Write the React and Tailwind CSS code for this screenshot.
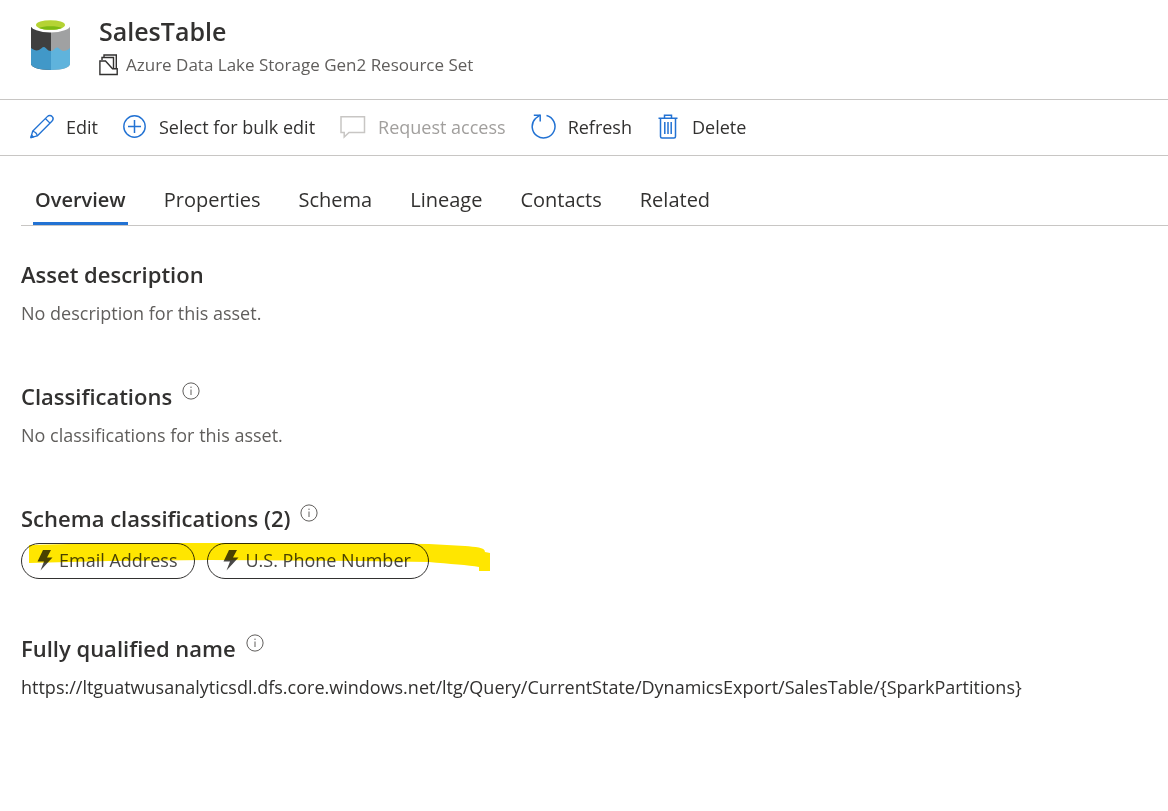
import React from "react";

function DataLakeIcon() {
  return (
    <svg width="40" height="50" viewBox="0 0 40 50" aria-hidden="true">
      <path d="M0 6V44C0 47 8 50 20 50V6Z" fill="#3f3f3f" />
      <path d="M20 6V50C32 50 39 47 39 44V6Z" fill="#a0a1a2" />
      <path d="M0 28C3 30 5 31 8 30C10 29 11 27 13 27C15 27 16 31 20 31V50C8 50 0 47 0 44Z" fill="#4198c8" />
      <path d="M20 31C23 31 24 27.500 26 27.500C28 27.500 29 30 32 31C35 31 37 30 39 28V44C39 47 32 50 20 50Z" fill="#5fb3dc" />
      <ellipse cx="19.5" cy="5" rx="20" ry="7.500" fill="#fff" />
      <ellipse cx="19.5" cy="5" rx="14.5" ry="4.8" fill="#b5d334" />
      <path d="M8 7.900C12 5.700 27 5.700 31 7.900C26 10.400 13 10.400 8 7.900Z" fill="#7dba12" />
    </svg>
  );
}

function ResourceSetIcon() {
  return (
    <svg width="20" height="22" viewBox="0 0 20 22" fill="none" stroke="#323130" strokeWidth="1.400" aria-hidden="true">
      <path d="M3 6V3.500H14.500V14" />
      <path d="M5 3.500V1H17.300V14.500" />
      <path d="M0.900 7H6.500L13.500 14.700H18.200V20.500H0.900Z" />
    </svg>
  );
}

function EditIcon() {
  return (
    <svg width="24" height="25" viewBox="0 0 25 25" fill="none" stroke="#2272d3" strokeWidth="1.400" strokeLinejoin="round" aria-hidden="true">
      <path d="M1 24L2.700 17.500L18 2.200C19.500 0.700 21.800 0.700 23 2C24.300 3.300 24.300 5.500 22.800 7L7.500 22.300Z" />
      <path d="M16 4.200L20.800 9M2.700 17.500C5 17.500 7.500 20 7.500 22.300" />
      <path d="M1 24L3.500 23.300L1.700 21.500Z" fill="#2272d3" />
    </svg>
  );
}

function AddIcon() {
  return (
    <svg width="24" height="24" viewBox="0 0 24 24" fill="none" stroke="#2272d3" strokeWidth="1.400" aria-hidden="true">
      <circle cx="11.500" cy="11.500" r="10.700" />
      <path d="M11.500 5V18M5 11.500H18" strokeWidth="1.500" />
    </svg>
  );
}

function CommentIcon() {
  return (
    <svg width="26" height="24" viewBox="0 0 26 24" fill="none" stroke="#c8c6c4" strokeWidth="1.500" aria-hidden="true">
      <path d="M1 1.800H24.500V17.500H9L4.200 22V17.500H1Z" />
    </svg>
  );
}

function RefreshIcon() {
  return (
    <svg width="25" height="25" viewBox="0 0 25 25" fill="none" stroke="#2272d3" strokeWidth="1.500" aria-hidden="true">
      <path d="M15.500 1.500A11.400 11.400 0 1 1 4.500 4.500L9 1.200" />
      <path d="M2.800 1.200H9.200V7.500" />
    </svg>
  );
}

function TrashIcon() {
  return (
    <svg width="23" height="25" viewBox="0 0 23 25" fill="none" stroke="#2272d3" strokeWidth="1.500" aria-hidden="true">
      <path d="M1.500 4.200H20.500M7.500 4V1.200H14.500V4M3.500 4.200V22.500Q3.500 24 5 24H17Q18.500 24 18.500 22.500V4.200" />
      <path d="M7.800 8V20M11 8V20M14.200 8V20" />
    </svg>
  );
}

function BoltIcon() {
  return (
    <svg width="16" height="22" viewBox="0 0 16 22" fill="#494847" aria-hidden="true">
      <path d="M6 1H14L10 8.500H15.500L3.500 21.500L7 12.500H0.500Z" />
    </svg>
  );
}

function InfoIcon() {
  return (
    <svg width="18" height="18" viewBox="0 0 18 18" fill="none" stroke="#605e5c" aria-hidden="true">
      <circle cx="9" cy="9" r="8.100" />
      <path d="M9 7.500V13M9 4.600V6" />
    </svg>
  );
}

function Command({ icon, label, disabled }) {
  return (
    <button
      type="button"
      disabled={disabled}
      className="flex items-center gap-3 text-[#323130] disabled:text-[#a19f9d]"
    >
      {icon}
      <span>{label}</span>
    </button>
  );
}

function Section({ title, info, children }) {
  return (
    <section className="flex flex-col gap-[9px]">
      <div className="flex gap-2.5">
        <h2 className="text-[22px] leading-8 font-semibold text-[#323130]">{title}</h2>
        {info && (
          <button type="button" aria-label={`About ${title}`} className="self-start pt-0.5">
            <InfoIcon />
          </button>
        )}
      </div>
      {children}
    </section>
  );
}

function Pill({ label }) {
  return (
    <li className="flex h-9 items-center gap-1.5 rounded-full border border-[#323130] pr-[17px] pb-0.5 pl-[15px] text-[#494847]">
      <BoltIcon />
      <span className="leading-7">{label}</span>
    </li>
  );
}

const tabs = ["Overview", "Properties", "Schema", "Lineage", "Contacts", "Related"];

export default function App() {
  return (
    <div className="min-h-screen bg-white font-['Open_Sans','Noto_Sans',sans-serif] text-lg text-[#323130]">
      <header className="flex gap-7 border-b border-[#c8c6c4] pt-[15px] pb-[19px] pl-[31px]">
        <div className="pt-[5px]">
          <DataLakeIcon />
        </div>
        <div>
          <h1 className="text-[25px] leading-8 font-semibold">SalesTable</h1>
          <p className="flex items-center gap-[7px] pt-0.5 text-[17px] leading-[31px] text-[#605e5c]">
            <ResourceSetIcon />
            Azure Data Lake Storage Gen2 Resource Set
          </p>
        </div>
      </header>

      <div role="toolbar" aria-label="Asset actions" className="flex h-14 items-center gap-[25px] border-b border-[#c8c6c4] pb-0.5 pl-[30px]">
        <Command icon={<EditIcon />} label="Edit" />
        <Command icon={<AddIcon />} label="Select for bulk edit" />
        <Command icon={<CommentIcon />} label="Request access" disabled />
        <Command icon={<RefreshIcon />} label="Refresh" />
        <Command icon={<TrashIcon />} label="Delete" />
      </div>

      <main className="pl-[21px]">
        <div role="tablist" className="flex gap-[34px] border-b border-[#c8c6c4] pt-[21px] pl-3">
          {tabs.map((tab, i) => (
            <button
              key={tab}
              type="button"
              role="tab"
              aria-selected={i === 0}
              className="border-b-[3px] border-transparent px-0.5 pt-[9px] pb-2 text-xl leading-7 aria-selected:border-[#2272d3] aria-selected:font-semibold"
            >
              {tab}
            </button>
          ))}
        </div>

        <div className="flex flex-col gap-[53px] pt-8 pb-10">
          <Section title="Asset description">
            <p className="leading-7 text-[#605e5c]">No description for this asset.</p>
          </Section>
          <Section title="Classifications" info>
            <p className="leading-7 text-[#605e5c]">No classifications for this asset.</p>
          </Section>
          <Section title="Schema classifications (2)" info>
            <div className="relative">
              <ul className="flex gap-3">
                <Pill label="Email Address" />
                <Pill label="U.S. Phone Number" />
              </ul>
              <svg className="pointer-events-none absolute top-0 left-2 mix-blend-multiply" width="461" height="30" viewBox="0 0 461 30" aria-hidden="true">
                <path d="M0 2L60 0.500L160 0L300 0L400 1L436 3C446 4 456 4 456 9L461 10V28H450V24C440 22 420 21 400 19L330 18L180 17L80 18L0 20Z" fill="#ffe600" />
              </svg>
            </div>
          </Section>
          <Section title="Fully qualified name" info>
            <p className="leading-7 break-words">
              https://ltguatwusanalyticsdl.dfs.core.windows.net/ltg/Query/CurrentState/DynamicsExport/SalesTable/&#123;SparkPartitions&#125;
            </p>
          </Section>
        </div>
      </main>
    </div>
  );
}
